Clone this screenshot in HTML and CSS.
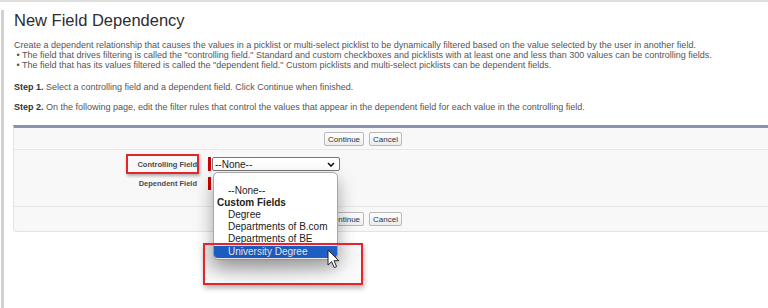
FILE: index.html
```html
<!DOCTYPE html>
<html lang="en">
<head>
    <meta charset="UTF-8">
    <title>New Field Dependency</title>
    <link rel="stylesheet" href="styles.css">
</head>
<body>
    <div class="shell">
        <div class="content">
            <h1 class="title">New Field Dependency</h1>

            <div class="intro">
                Create a dependent relationship that causes the values in a picklist or multi-select picklist to be dynamically filtered based on the value selected by the user in another field.<br>
                &nbsp;• The field that drives filtering is called the "controlling field." Standard and custom checkboxes and picklists with at least one and less than 300 values can be controlling fields.<br>
                &nbsp;• The field that has its values filtered is called the "dependent field." Custom picklists and multi-select picklists can be dependent fields.
            </div>

            <p class="step"><b>Step 1.</b> Select a controlling field and a dependent field. Click Continue when finished.</p>
            <p class="step"><b>Step 2.</b> On the following page, edit the filter rules that control the values that appear in the dependent field for each value in the controlling field.</p>

            <div class="block">
                <div class="btn-row top">
                    <button class="btn">Continue</button>
                    <button class="btn">Cancel</button>
                </div>

                <div class="form">
                    <div class="row">
                        <div class="label"><span class="mark">Controlling Field</span></div>
                        <div class="field">
                            <span class="req"></span>
                            <div class="select-wrap">
                                <div class="select">
                                    <span>--None--</span>
                                    <svg class="chevron" width="8" height="5" viewBox="0 0 8 5"><path d="M1 1 L4 4 L7 1" fill="none" stroke="#111" stroke-width="1.6"/></svg>
                                </div>

                                <!-- opened picklist -->
                                <div class="dropdown">
                                    <div class="opt sub">--None--</div>
                                    <div class="opt group">Custom Fields</div>
                                    <div class="opt sub">Degree</div>
                                    <div class="opt sub">Departments of B.com</div>
                                    <div class="opt sub">Departments of BE</div>
                                    <div class="opt sub active">University Degree</div>
                                    <div class="highlight-box"></div>
                                    <svg class="cursor" width="13" height="20" viewBox="0 0 13 20"><path d="M1 1 L1 16 L4.6 12.6 L7.2 18.6 L9.6 17.6 L7 11.7 L11.8 11.7 Z" fill="#fff" stroke="#222" stroke-width="1" stroke-linejoin="round"/></svg>
                                </div>
                            </div>
                        </div>
                    </div>
                    <div class="row">
                        <div class="label">Dependent Field</div>
                        <div class="field">
                            <span class="req"></span>
                        </div>
                    </div>
                </div>

                <div class="btn-row bottom">
                    <button class="btn">Continue</button>
                    <button class="btn">Cancel</button>
                </div>
            </div>
        </div>
    </div>
</body>
</html>
```

FILE: styles.css
```css
body {
    margin: 0;
    font-family: "Liberation Sans", Arial, sans-serif;
    background: #fff;
    overflow: hidden;
}
.shell {
    border-top: 2px solid #dedede;
    padding-top: 11px;
}
.content {
    border-left: 3px solid #d2d2d2;
    margin-left: 1px;
    padding-left: 10px;
    min-height: 300px;
}
.title {
    margin: -3px 0 0;
    font-size: 16.5px;
    font-weight: normal;
    line-height: 20px;
    color: #2d2d2d;
}
.intro {
    margin-top: 10px;
    font-size: 9px;
    line-height: 10px;
    color: #555;
}
.step {
    margin: 12px 0 0;
    font-size: 9px;
    line-height: 10px;
    color: #555;
}
.step + .step {
    margin-top: 10px;
}
.step b {
    color: #333;
}
.block {
    margin: 13px 0 0 -1px;
    border-top: 3px solid #8794b0;
    border-left: 1px solid #e4e4e4;
    border-bottom: 1px solid #e4e4e4;
    border-radius: 0 0 0 4px;
    background: #f8f8f8;
}
.btn-row {
    display: flex;
    gap: 5px;
    padding-left: 310px;
}
.btn-row.top {
    padding-top: 4px;
    padding-bottom: 3px;
    border-bottom: 1px solid #e8e8e8;
}
.btn-row.bottom {
    padding-top: 5px;
    padding-bottom: 5px;
}
.btn {
    height: 14px;
    padding: 0 3px;
    font-family: "Liberation Sans", Arial, sans-serif;
    font-size: 8px;
    color: #333;
    background: linear-gradient(#fff, #ececec);
    border: 1px solid #b9b9b9;
    border-radius: 2px;
}
.form {
    display: flex;
    flex-direction: column;
    gap: 6px;
    padding: 7px 0 16px;
    border-bottom: 1px solid #e6e6e6;
}
.row {
    display: flex;
    align-items: center;
    height: 14px;
}
.row + .row {
    height: 13px;
}
.label {
    width: 183px;
    text-align: right;
    font-size: 7.5px;
    font-weight: bold;
    color: #4a4a56;
}
.mark {
    position: relative;
}
.mark::after {
    content: "";
    position: absolute;
    left: -11px;
    right: -2px;
    top: -6px;
    bottom: -5px;
    border: 2px solid #e3262b;
    box-shadow: 1px 2px 3px rgba(0, 0, 0, 0.3);
}
.field {
    display: flex;
    align-items: stretch;
    height: 100%;
    margin-left: 11px;
}
.req {
    width: 3px;
    background: #c00;
}
.select-wrap {
    position: relative;
    margin-left: 1px;
}
.select {
    display: flex;
    align-items: center;
    justify-content: space-between;
    box-sizing: border-box;
    width: 128px;
    height: 14px;
    padding: 0 4px 0 2px;
    font-size: 10px;
    color: #222;
    background: #fff;
    border: 1px solid #767676;
    border-radius: 2px;
}
.dropdown {
    position: absolute;
    left: 1px;
    top: 15px;
    z-index: 2;
    box-sizing: border-box;
    width: 125px;
    padding-top: 12px;
    padding-bottom: 1px;
    background: #fff;
    border: 1px solid #a7a7a7;
    border-radius: 5px;
    box-shadow: 0 8px 18px rgba(0, 0, 0, 0.35);
}
.opt {
    height: 12.1px;
    line-height: 12px;
    font-size: 10px;
    color: #222;
    white-space: nowrap;
}
.opt.group {
    padding-left: 3px;
    font-weight: bold;
}
.opt.sub {
    padding-left: 14px;
}
.opt.active {
    height: 12px;
    margin: 1px 0 0;
    color: #fff;
    background: #1f66d4;
    border-radius: 0 0 4px 4px;
}
.highlight-box {
    position: absolute;
    left: -11px;
    top: 70px;
    width: 160px;
    height: 42px;
    box-sizing: border-box;
    border: 2px solid #e3262b;
    background: radial-gradient(ellipse at 35% 20%, rgba(0, 0, 0, 0.14), rgba(0, 0, 0, 0.02) 75%);
    box-shadow: 1px 3px 5px rgba(0, 0, 0, 0.3);
}
.cursor {
    position: absolute;
    left: 113px;
    top: 76px;
}
```
